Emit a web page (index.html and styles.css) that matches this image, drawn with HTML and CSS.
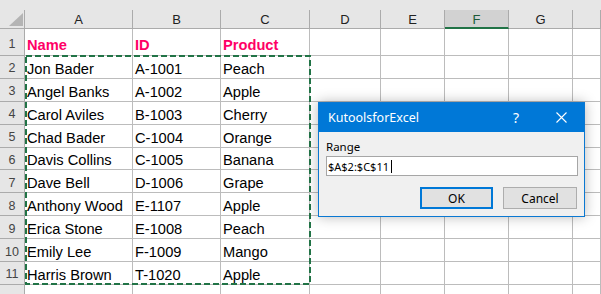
FILE: index.html
```html
<!DOCTYPE html>
<html>
<head>
  <title>KutoolsforExcel - Range</title>
  <link rel="stylesheet" href="styles.css">
</head>
<body>
  <div class="sheet">
    <div class="topband"></div>

    <div class="row head">
      <div class="corner"><span class="tri"></span></div>
      <div class="col">A</div>
      <div class="col">B</div>
      <div class="col">C</div>
      <div class="col">D</div>
      <div class="col">E</div>
      <div class="col sel">F</div>
      <div class="col">G</div>
      <div class="col"></div>
    </div>

    <div class="row r1">
      <div class="num">1</div>
      <div class="cell title">Name</div>
      <div class="cell title">ID</div>
      <div class="cell title">Product</div>
      <div class="cell"></div><div class="cell"></div><div class="cell"></div><div class="cell"></div><div class="cell"></div>
    </div>
    <div class="row">
      <div class="num">2</div>
      <div class="cell">Jon Bader</div>
      <div class="cell">A-1001</div>
      <div class="cell">Peach</div>
      <div class="cell"></div><div class="cell"></div><div class="cell"></div><div class="cell"></div><div class="cell"></div>
    </div>
    <div class="row">
      <div class="num">3</div>
      <div class="cell">Angel Banks</div>
      <div class="cell">A-1002</div>
      <div class="cell">Apple</div>
      <div class="cell"></div><div class="cell"></div><div class="cell"></div><div class="cell"></div><div class="cell"></div>
    </div>
    <div class="row">
      <div class="num">4</div>
      <div class="cell">Carol Aviles</div>
      <div class="cell">B-1003</div>
      <div class="cell">Cherry</div>
      <div class="cell"></div><div class="cell"></div><div class="cell"></div><div class="cell"></div><div class="cell"></div>
    </div>
    <div class="row">
      <div class="num">5</div>
      <div class="cell">Chad Bader</div>
      <div class="cell">C-1004</div>
      <div class="cell">Orange</div>
      <div class="cell"></div><div class="cell"></div><div class="cell"></div><div class="cell"></div><div class="cell"></div>
    </div>
    <div class="row">
      <div class="num">6</div>
      <div class="cell">Davis Collins</div>
      <div class="cell">C-1005</div>
      <div class="cell">Banana</div>
      <div class="cell"></div><div class="cell"></div><div class="cell"></div><div class="cell"></div><div class="cell"></div>
    </div>
    <div class="row">
      <div class="num">7</div>
      <div class="cell">Dave Bell</div>
      <div class="cell">D-1006</div>
      <div class="cell">Grape</div>
      <div class="cell"></div><div class="cell"></div><div class="cell"></div><div class="cell"></div><div class="cell"></div>
    </div>
    <div class="row">
      <div class="num">8</div>
      <div class="cell">Anthony Wood</div>
      <div class="cell">E-1107</div>
      <div class="cell">Apple</div>
      <div class="cell"></div><div class="cell"></div><div class="cell"></div><div class="cell"></div><div class="cell"></div>
    </div>
    <div class="row">
      <div class="num">9</div>
      <div class="cell">Erica Stone</div>
      <div class="cell">E-1008</div>
      <div class="cell">Peach</div>
      <div class="cell"></div><div class="cell"></div><div class="cell"></div><div class="cell"></div><div class="cell"></div>
    </div>
    <div class="row">
      <div class="num">10</div>
      <div class="cell">Emily Lee</div>
      <div class="cell">F-1009</div>
      <div class="cell">Mango</div>
      <div class="cell"></div><div class="cell"></div><div class="cell"></div><div class="cell"></div><div class="cell"></div>
    </div>
    <div class="row">
      <div class="num">11</div>
      <div class="cell">Harris Brown</div>
      <div class="cell">T-1020</div>
      <div class="cell">Apple</div>
      <div class="cell"></div><div class="cell"></div><div class="cell"></div><div class="cell"></div><div class="cell"></div>
    </div>
    <div class="row last">
      <div class="num"></div>
      <div class="cell"></div><div class="cell"></div><div class="cell"></div><div class="cell"></div>
      <div class="cell"></div><div class="cell"></div><div class="cell"></div><div class="cell"></div>
    </div>

    <!-- copy marquee around A2:C11 -->
    <svg class="ants" width="286" height="230" viewBox="0 0 286 230">
      <rect x="1" y="1" width="284" height="228" fill="none" stroke="#217346" stroke-width="2" stroke-dasharray="6 3"/>
    </svg>

    <div class="dialog">
      <div class="dialog-title">
        <span class="title-text">KutoolsforExcel</span>
        <span class="help">?</span>
        <span class="close">
          <svg width="11" height="11" viewBox="0 0 11 11">
            <path d="M0.5 0.5 L10.5 10.5 M10.5 0.5 L0.5 10.5" stroke="#fff" stroke-width="1.1" fill="none"/>
          </svg>
        </span>
      </div>
      <div class="dialog-body">
        <div class="label">Range</div>
        <div class="input">$A$2:$C$11<span class="caret"></span></div>
        <div class="buttons">
          <div class="btn default">OK</div>
          <div class="btn">Cancel</div>
        </div>
      </div>
    </div>
  </div>
</body>
</html>
```

FILE: styles.css
```css
* {
  box-sizing: border-box;
  margin: 0;
  padding: 0;
}

body {
  width: 601px;
  height: 294px;
  overflow: hidden;
  background-color: #fff;
  font-family: "Liberation Sans", Arial, sans-serif;
}

.sheet {
  position: relative;
  width: 601px;
  height: 294px;
  overflow: hidden;
}

.topband {
  height: 10px;
  background-color: #e6e6e6;
}

.row {
  display: grid;
  grid-template-columns: 25px 108px 88px 89px 71px 64px 64px 64px 1fr;
  height: 22.9px;
}

.row.head {
  height: 19px;
}

.row.r1 {
  height: 27px;
}

.row.last {
  height: 20px;
}

/* column headers */
.col,
.corner {
  background-color: #e6e6e6;
  border-right: 1px solid #ababab;
  border-bottom: 1px solid #ababab;
  display: flex;
  align-items: center;
  justify-content: center;
  font-size: 13px;
  color: #222;
  padding-top: 1px;
}

.col.sel {
  background-color: #d2d2d2;
  border-bottom: 2px solid #217346;
  color: #1e5a38;
}

.corner {
  align-items: flex-end;
  justify-content: flex-end;
  padding: 0 1px 2px 0;
}

.tri {
  width: 14px;
  height: 13px;
  background-color: #b4b4b4;
  clip-path: polygon(100% 0, 100% 100%, 0 100%);
}

/* row numbers */
.num {
  background-color: #e6e6e6;
  border-right: 1px solid #ababab;
  border-bottom: 1px solid #ababab;
  display: flex;
  align-items: center;
  justify-content: center;
  padding-top: 3px;
  font-size: 12.5px;
  color: #444;
}

/* cells */
.cell {
  border-right: 1px solid #bcbcbc;
  border-bottom: 1px solid #bcbcbc;
  display: flex;
  align-items: flex-end;
  padding-left: 2px;
  font-size: 14.67px;
  line-height: 18px;
  color: #000;
  white-space: nowrap;
  overflow: hidden;
}

.cell.title {
  color: #ff0066;
  font-weight: bold;
  padding-bottom: 1px;
}

.ants {
  position: absolute;
  left: 25px;
  top: 55px;
}

/* dialog */
.dialog {
  position: absolute;
  left: 318px;
  top: 102px;
  width: 267px;
  border: 1px solid #0a78d2;
  background-color: #f0f0f0;
  box-shadow: 0 0 12px rgba(0, 0, 0, 0.28);
  font-family: "Noto Sans", "Open Sans", sans-serif;
  font-size: 11.5px;
  color: #000;
}

.dialog-title {
  height: 29px;
  background-color: #0078d7;
  color: #fff;
  display: flex;
  align-items: center;
  padding-left: 9px;
}

.title-text {
  flex: 1;
  font-size: 12.5px;
}

.help {
  width: 30px;
  margin-right: 7px;
  text-align: center;
  font-size: 14px;
}

.close {
  width: 46px;
  display: flex;
  justify-content: center;
}

.dialog-body {
  padding: 7px 6px 7px 7px;
}

.label {
  line-height: 16px;
  margin-bottom: 1px;
}

.input {
  height: 20px;
  background-color: #fff;
  border: 1px solid #a6a6a6;
  display: flex;
  align-items: center;
  padding-left: 1px;
  font-size: 11px;
}

.caret {
  width: 1px;
  height: 13px;
  background-color: #000;
  margin-left: 2px;
}

.buttons {
  display: flex;
  justify-content: flex-end;
  gap: 10px;
  margin-top: 11px;
  margin-right: 1px;
}

.btn {
  width: 74px;
  height: 22px;
  background-color: #e1e1e1;
  border: 1px solid #adadad;
  display: flex;
  align-items: center;
  justify-content: center;
  font-size: 12px;
}

.btn.default {
  width: 73px;
  border: 2px solid #0078d7;
}
```
